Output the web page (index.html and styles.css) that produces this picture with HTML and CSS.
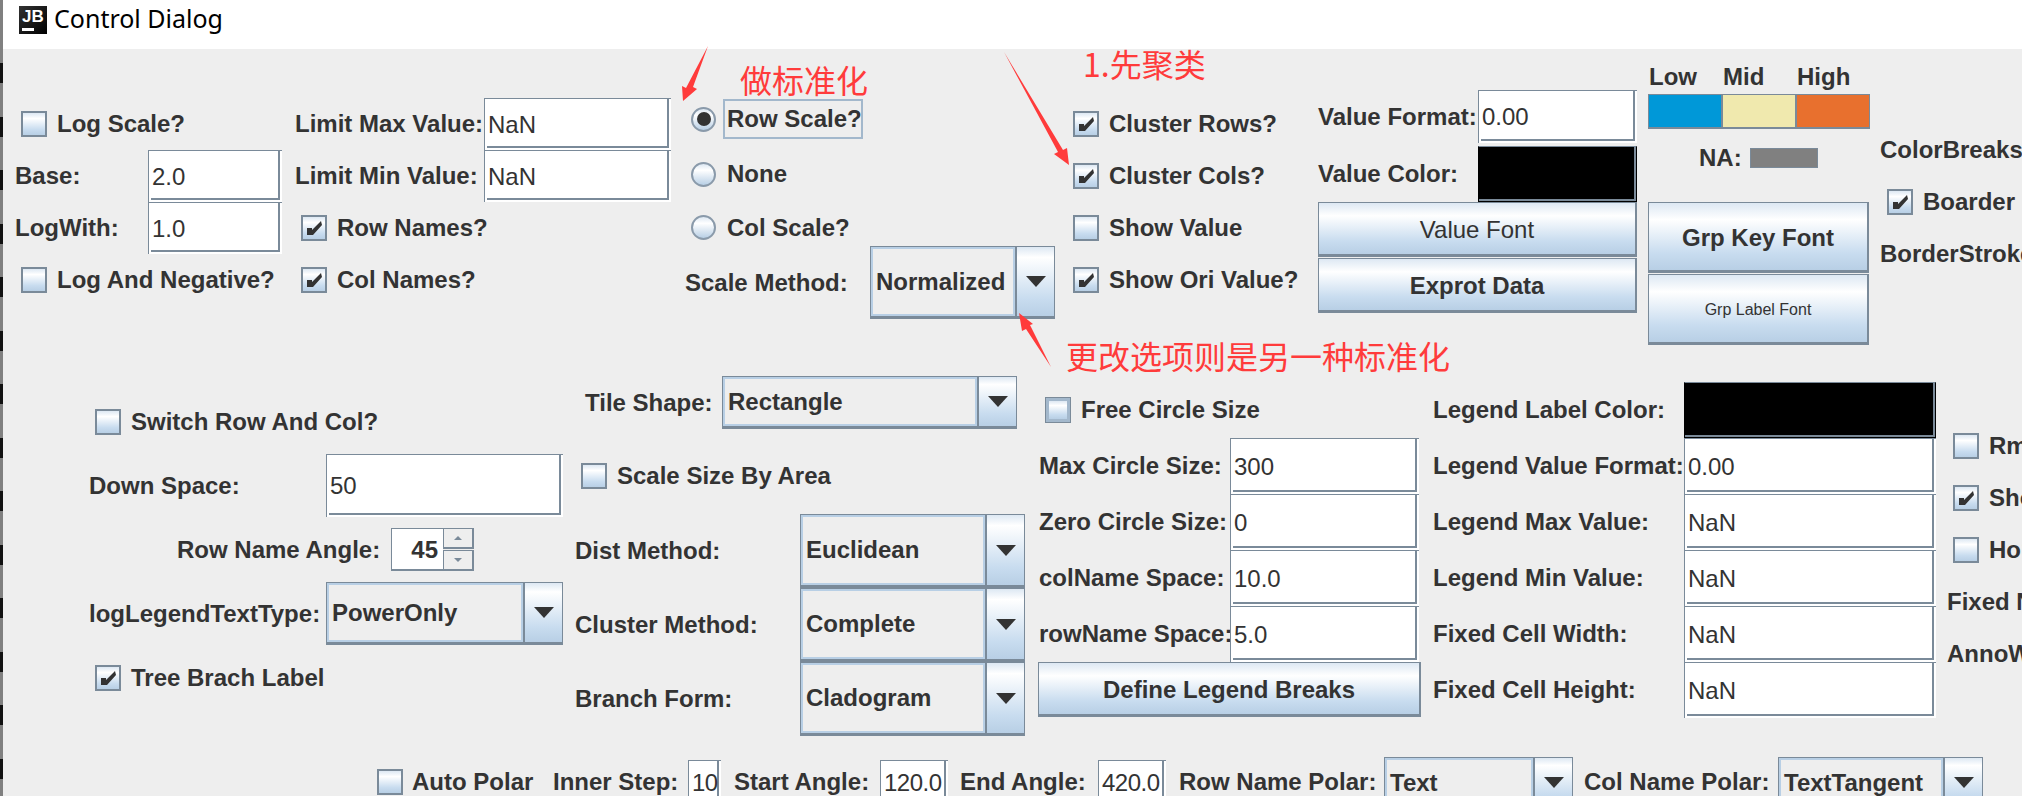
FILE: index.html
```html
<!DOCTYPE html>
<html lang="en">
<head>
    <meta charset="UTF-8">
    <title>Control Dialog</title>
    <link rel="stylesheet" href="styles.css">
</head>
<body>
    <div class="edge"></div>

    <header class="titlebar">
        <div class="jb-logo"><span>JB</span><i></i></div>
        <div class="title">Control Dialog</div>
    </header>

    <section class="top">
        <div class="col col-a">
            <div class="row pad-check"><span class="check"></span><span class="lbl">Log Scale?</span></div>
            <div class="row pad-base"><span class="lbl w-base">Base:</span><div class="field w-base-field">2.0</div></div>
            <div class="row pad-base"><span class="lbl w-base">LogWith:</span><div class="field w-base-field">1.0</div></div>
            <div class="row pad-check"><span class="check"></span><span class="lbl">Log And Negative?</span></div>
        </div>
        <div class="col col-b">
            <div class="row"><span class="lbl w-limit">Limit Max Value:</span><div class="field w-limit-field">NaN</div></div>
            <div class="row"><span class="lbl w-limit">Limit Min Value:</span><div class="field w-limit-field">NaN</div></div>
            <div class="row pad-6"><span class="check on"></span><span class="lbl">Row Names?</span></div>
            <div class="row pad-6"><span class="check on"></span><span class="lbl">Col Names?</span></div>
        </div>
        <div class="col col-c">
            <div class="radio-row"><span class="radio on"></span><span class="lbl focus">Row Scale?</span></div>
            <div class="radio-row"><span class="radio"></span><span class="lbl radio-lbl">None</span></div>
            <div class="radio-row"><span class="radio"></span><span class="lbl radio-lbl">Col Scale?</span></div>
            <div class="method-row"><span class="lbl w-method">Scale Method:</span><div class="combo w-method-combo"><span class="combo-val">Normalized</span><span class="combo-btn"></span></div></div>
        </div>
        <div class="col col-d">
            <div class="row"><span class="check on"></span><span class="lbl">Cluster Rows?</span></div>
            <div class="row"><span class="check on"></span><span class="lbl">Cluster Cols?</span></div>
            <div class="row"><span class="check"></span><span class="lbl">Show Value</span></div>
            <div class="row"><span class="check on"></span><span class="lbl">Show Ori Value?</span></div>
        </div>
        <div class="col col-e">
            <div class="value-row h-53"><span class="lbl w-value">Value Format:</span><div class="field w-value-field">0.00</div></div>
            <div class="value-row h-56"><span class="lbl w-value">Value Color:</span><div class="color-btn w-value-field"></div></div>
            <button class="btn plain h-55">Value Font</button>
            <button class="btn h-55 mt-1">Exprot Data</button>
        </div>
        <div class="col col-f">
            <div class="swatch-labels"><span class="lbl">Low</span><span class="lbl">Mid</span><span class="lbl">High</span></div>
            <div class="swatches"><div class="swatch low"></div><div class="swatch mid"></div><div class="swatch high"></div></div>
            <div class="na-row"><span class="lbl w-na">NA:</span><div class="swatch-na"></div></div>
            <button class="btn grp-btn">Grp Key Font</button>
            <button class="btn grp-btn small mt-1">Grp Label Font</button>
        </div>
        <div class="col col-g">
            <div class="row"><span class="lbl">ColorBreaks</span></div>
            <div class="row pad-7"><span class="check on"></span><span class="lbl">Boarder</span></div>
            <div class="row"><span class="lbl">BorderStroke:</span></div>
        </div>
    </section>

    <section class="bottom">
        <div class="col col-h">
            <div class="row-check pad-6 mt-64"><span class="check"></span><span class="lbl">Switch Row And Col?</span></div>
            <div class="row-tall mt-19"><span class="lbl w-side">Down Space:</span><div class="field w-side">50</div></div>
            <div class="row-angle mt-11"><span class="lbl w-angle">Row Name Angle:</span>
                <div class="spinner">
                    <div class="spin-val">45</div>
                    <div class="spin-btns"><span class="spin-up"></span><span class="spin-down"></span></div>
                </div>
            </div>
            <div class="row-tall mt-11"><span class="lbl w-side">logLegendTextType:</span><div class="combo w-side"><span class="combo-val">PowerOnly</span><span class="combo-btn"></span></div></div>
            <div class="row-check pad-6 mt-20"><span class="check on"></span><span class="lbl">Tree Brach Label</span></div>
        </div>
        <div class="col col-i">
            <div class="row-tile"><span class="lbl w-tile">Tile Shape:</span><div class="combo w-tile-combo"><span class="combo-val">Rectangle</span><span class="combo-btn"></span></div></div>
            <div class="row-check pad-6 mt-34"><span class="check"></span><span class="lbl">Scale Size By Area</span></div>
            <div class="row-dist mt-25"><span class="lbl w-dist">Dist Method:</span><div class="combo w-dist"><span class="combo-val">Euclidean</span><span class="combo-btn"></span></div></div>
            <div class="row-dist"><span class="lbl w-dist">Cluster Method:</span><div class="combo w-dist"><span class="combo-val">Complete</span><span class="combo-btn"></span></div></div>
            <div class="row-dist"><span class="lbl w-dist">Branch Form:</span><div class="combo w-dist"><span class="combo-val">Cladogram</span><span class="combo-btn"></span></div></div>
        </div>
        <div class="col col-j">
            <div class="row-check pad-7 mt-52"><span class="check soft"></span><span class="lbl">Free Circle Size</span></div>
            <div class="row-56 mt-15"><span class="lbl w-circle">Max Circle Size:</span><div class="field w-circle-field">300</div></div>
            <div class="row-56"><span class="lbl w-circle">Zero Circle Size:</span><div class="field w-circle-field">0</div></div>
            <div class="row-56"><span class="lbl w-circle">colName Space:</span><div class="field w-circle-field">10.0</div></div>
            <div class="row-56"><span class="lbl w-circle">rowName Space:</span><div class="field w-circle-field">5.0</div></div>
            <button class="btn legend-btn">Define Legend Breaks</button>
        </div>
        <div class="col col-k">
            <div class="row-56 mt-37"><span class="lbl w-legend">Legend Label Color:</span><div class="color-btn w-legend-field"></div></div>
            <div class="row-56"><span class="lbl w-legend">Legend Value Format:</span><div class="field w-legend-field">0.00</div></div>
            <div class="row-56"><span class="lbl w-legend">Legend Max Value:</span><div class="field w-legend-field">NaN</div></div>
            <div class="row-56"><span class="lbl w-legend">Legend Min Value:</span><div class="field w-legend-field">NaN</div></div>
            <div class="row-56"><span class="lbl w-legend">Fixed Cell Width:</span><div class="field w-legend-field">NaN</div></div>
            <div class="row-56"><span class="lbl w-legend">Fixed Cell Height:</span><div class="field w-legend-field">NaN</div></div>
        </div>
        <div class="col col-l">
            <div class="row pad-6"><span class="check"></span><span class="lbl">Rm Zero</span></div>
            <div class="row pad-6"><span class="check on"></span><span class="lbl">Show Grid</span></div>
            <div class="row pad-6"><span class="check"></span><span class="lbl">Horizontal</span></div>
            <div class="row"><span class="lbl">Fixed Name</span></div>
            <div class="row"><span class="lbl">AnnoWidth</span></div>
        </div>
    </section>

    <section class="strip">
        <div class="polar-check"><span class="check"></span><span class="lbl">Auto Polar</span></div>
        <span class="lbl w-inner">Inner Step:</span>
        <div class="field strip-field w-inner-field">10</div>
        <span class="lbl w-start">Start Angle:</span>
        <div class="field strip-field w-angle-field">120.0</div>
        <span class="lbl w-end">End Angle:</span>
        <div class="field strip-field w-angle-field">420.0</div>
        <span class="lbl w-rowpolar">Row Name Polar:</span>
        <div class="combo w-rowpolar-combo"><span class="combo-val">Text</span><span class="combo-btn"></span></div>
        <span class="lbl w-colpolar">Col Name Polar:</span>
        <div class="combo w-colpolar-combo"><span class="combo-val">TextTangent</span><span class="combo-btn"></span></div>
    </section>

    <!-- red notes pasted over the screenshot -->
    <svg class="arrows" width="2022" height="796" viewBox="0 0 2022 796">
        <polygon points="708,46 693,87 697,89 683,101 682,86 686,88"/>
        <polygon points="1004,52 1063,150 1067,148 1069,165 1054,154 1058,152"/>
        <polygon points="1051,367 1030,325 1033,324 1019,313 1022,331 1026,329"/>
    </svg>
    <div class="note note-scale">做标准化</div>
    <div class="note note-cluster">1.先聚类</div>
    <div class="note note-change">更改选项则是另一种标准化</div>
</body>
</html>
```

FILE: styles.css
```css
* {
    box-sizing: border-box;
}
html, body {
    margin: 0;
    width: 2022px;
    height: 796px;
    overflow: hidden;
}
body {
    background-color: #eeeeee;
    color: #333333;
    font-family: "Liberation Sans", Arial, sans-serif;
    font-size: 24px;
    position: relative;
}
.edge {
    position: absolute;
    left: 0;
    top: 0;
    width: 3px;
    height: 796px;
    background: #808080;
}
.edge::after {
    content: "";
    position: absolute;
    left: 0;
    top: 63px;
    bottom: 0;
    width: 3px;
    background: repeating-linear-gradient(to bottom, #111111 0, #111111 20px, #808080 20px, #808080 53.5px);
}

/* title bar */
.titlebar {
    height: 49px;
    background: #ffffff;
    display: flex;
    align-items: center;
    padding-left: 19px;
    gap: 7px;
}
.jb-logo {
    width: 28px;
    height: 28px;
    background: linear-gradient(135deg, #333333, #000000);
    color: #ffffff;
    position: relative;
    margin-bottom: 10px;
    font-weight: bold;
    font-size: 17px;
    line-height: 17px;
    padding: 2px 0 0 3px;
}
.jb-logo i {
    position: absolute;
    left: 3px;
    top: 22px;
    width: 12px;
    height: 3px;
    background: #ffffff;
}
.title {
    font-family: "Noto Sans", sans-serif;
    font-size: 25px;
    color: #000000;
    margin-bottom: 13px;
}

/* main sections */
.top {
    display: flex;
    height: 296px;
}
.bottom {
    display: flex;
    height: 412px;
}
.strip {
    display: flex;
    align-items: center;
    height: 50px;
    padding-left: 377px;
}
.col {
    flex: none;
}
.col-a { width: 295px; padding-top: 49px; }
.col-b { width: 390px; padding-top: 49px; }
.col-c {
    width: 388px;
    padding-top: 50px;
    display: grid;
    grid-template-rows: 40px 70px 37px 73px;
}
.col-d { width: 245px; padding-top: 49px; }
.col-e { width: 330px; padding-top: 41px; }
.col-f { width: 232px; padding-top: 11px; }
.col-g { width: 142px; padding-top: 75px; }
.col-h { width: 575px; padding-left: 89px; }
.col-i { width: 463px; }
.col-j { width: 395px; }
.col-k { width: 514px; }
.col-l { width: 75px; padding-top: 75px; }

.row {
    display: flex;
    align-items: center;
    height: 52px;
}
.row-check {
    display: flex;
    align-items: center;
    height: 26px;
}
.row-56 {
    display: flex;
    align-items: center;
    height: 56px;
}
.row-tall {
    display: flex;
    align-items: center;
    height: 63px;
}
.row-angle {
    display: flex;
    align-items: center;
    height: 43px;
    padding-left: 88px;
}
.row-tile {
    display: flex;
    align-items: center;
    height: 53px;
    margin-top: 31px;
    padding-left: 10px;
}
.row-dist {
    display: flex;
    align-items: center;
    height: 74px;
}
.radio-row {
    display: flex;
    align-items: center;
    padding-left: 6px;
    gap: 7px;
}
.method-row {
    display: flex;
    align-items: center;
}
.value-row {
    display: flex;
    align-items: center;
}

.pad-check { padding-left: 21px; }
.pad-base { padding-left: 15px; }
.pad-6 { padding-left: 6px; }
.pad-7 { padding-left: 7px; }
.mt-1 { margin-top: 1px; }
.mt-11 { margin-top: 11px; }
.mt-15 { margin-top: 15px; }
.mt-19 { margin-top: 19px; }
.mt-20 { margin-top: 20px; }
.mt-25 { margin-top: 25px; }
.mt-34 { margin-top: 34px; }
.mt-37 { margin-top: 37px; }
.mt-52 { margin-top: 52px; }
.mt-64 { margin-top: 64px; }
.h-53 { height: 53px; margin-bottom: 3px; }
.h-55 { height: 55px; }
.h-56 { height: 56px; }

.lbl {
    font-weight: bold;
    white-space: nowrap;
    flex: none;
}
.w-base { width: 133px; }
.w-base-field { width: 134px; }
.w-limit { width: 189px; }
.w-limit-field { width: 187px; }
.w-method { width: 185px; }
.w-method-combo { width: 185px; }
.w-value { width: 160px; }
.w-value-field { width: 159px; }
.w-side { width: 237px; }
.w-angle { width: 214px; }
.w-tile { width: 137px; }
.w-tile-combo { width: 295px; }
.w-dist { width: 225px; }
.w-circle { width: 192px; padding-left: 1px; }
.w-circle-field { width: 189px; }
.w-legend { width: 251px; }
.w-legend-field { width: 252px; }
.w-inner { width: 135px; }
.w-inner-field { width: 33px; }
.w-start { width: 159px; padding-left: 13px; }
.w-end { width: 150px; padding-left: 12px; }
.w-angle-field { width: 68px; }
.w-rowpolar { width: 218px; padding-left: 13px; }
.w-rowpolar-combo { width: 189px; }
.w-colpolar { width: 205px; padding-left: 11px; }
.w-colpolar-combo { width: 205px; }
.w-na { width: 51px; }

/* swing style widgets */
.check {
    flex: none;
    display: block;
    width: 26px;
    height: 26px;
    margin-right: 10px;
    border: 2px solid #7a8a99;
    background: linear-gradient(to bottom, #dde8f3 0, #ffffff 25%, #c8dcef 75%, #b8cfe5 100%);
    position: relative;
}
.check.soft {
    border: 4px solid #a3b8cc;
    outline: 1px solid #7a8a99;
    outline-offset: -1px;
}
.check.on::after {
    content: "";
    position: absolute;
    left: 0;
    top: 0;
    width: 22px;
    height: 22px;
    background: #333333;
    clip-path: polygon(4px 11px, 9px 11px, 9px 13px, 18px 4px, 19px 8px, 10px 18px, 4px 18px);
}
.radio {
    flex: none;
    display: block;
    width: 25px;
    height: 25px;
    border: 2px solid #8a9aaa;
    border-radius: 50%;
    background: linear-gradient(to bottom, #dde8f3 0, #ffffff 30%, #b8cfe5 100%);
    position: relative;
}
.radio.on::after {
    content: "";
    position: absolute;
    left: 3.5px;
    top: 3.5px;
    width: 14px;
    height: 14px;
    border-radius: 50%;
    background: #333333;
}
.focus {
    display: flex;
    align-items: center;
    height: 40px;
    width: 140px;
    padding: 0 2px;
    border: 2px solid #a3b8cc;
}
.radio-lbl {
    padding: 0 4px;
}
.field {
    flex: none;
    height: 100%;
    display: flex;
    align-items: center;
    padding-left: 3px;
    background: #ffffff;
    color: #333333;
    border-top: 1px solid #7a8a99;
    border-left: 1px solid #7a8a99;
    box-shadow: inset 2px 0 0 #ffffff, inset -2px -2px 0 #ffffff, inset -4px -4px 0 #7a8a99;
}
.strip-field {
    height: 50px;
    padding-bottom: 6px;
    letter-spacing: -0.5px;
    margin-top: 3px;
    align-self: flex-start;
}
.color-btn {
    flex: none;
    height: 100%;
    background: #000000;
    border: 1px solid #000000;
    border-top-color: #7a8a99;
    box-shadow: inset -2px -2px 0 #7a8a99;
}
.btn {
    display: block;
    width: 319px;
    padding: 2px 0 0;
    border: 1px solid #7a8a99;
    border-right-width: 2px;
    border-bottom-width: 3px;
    background: linear-gradient(to bottom, #dde8f3 0, #ffffff 25%, #c8dcef 75%, #b8cfe5 100%);
    color: #333333;
    font-family: "Liberation Sans", Arial, sans-serif;
    font-size: 24px;
    font-weight: bold;
}
.btn.plain {
    font-weight: normal;
}
.btn.small {
    font-size: 16px;
    font-weight: normal;
}
.grp-btn {
    width: 221px;
    height: 71px;
}
.legend-btn {
    width: 383px;
    height: 55px;
}
.combo {
    flex: none;
    display: flex;
    height: 100%;
    background: #eeeeee;
    border: 1px solid #7a8a99;
    border-bottom-width: 3px;
}
.strip .combo {
    height: 53px;
    align-self: flex-start;
}
.combo-val {
    flex: 1;
    display: flex;
    align-items: center;
    padding-left: 3px;
    font-weight: bold;
    border: 2px solid #b8cfe5;
    white-space: nowrap;
}
.combo-btn {
    flex: none;
    width: 39px;
    border-left: 2px solid #7a8a99;
    background: linear-gradient(to bottom, #dde8f3 0, #ffffff 15%, #c8dcef 75%, #b8cfe5 100%);
    display: flex;
    align-items: center;
    justify-content: center;
}
.combo-btn::after {
    content: "";
    border-top: 11px solid #333333;
    border-left: 10px solid transparent;
    border-right: 10px solid transparent;
}
.spinner {
    flex: none;
    display: flex;
    width: 83px;
    height: 43px;
}
.spin-val {
    width: 52px;
    text-align: right;
    padding-right: 5px;
    font-weight: bold;
    line-height: 42px;
    background: #ffffff;
    border-top: 1px solid #7a8a99;
    border-left: 1px solid #7a8a99;
    box-shadow: inset 0 -2px 0 #7a8a99;
}
.spin-btns {
    width: 31px;
    display: flex;
    flex-direction: column;
    gap: 1px;
}
.spin-up, .spin-down {
    flex: 1;
    display: flex;
    align-items: center;
    justify-content: center;
    background: #eeeeee;
    border: 1px solid #7a8a99;
    border-right-width: 2px;
    border-bottom-width: 2px;
}
.spin-up::after {
    content: "";
    border-bottom: 4px solid #7a8a99;
    border-left: 4px solid transparent;
    border-right: 4px solid transparent;
}
.spin-down::after {
    content: "";
    border-top: 4px solid #7a8a99;
    border-left: 4px solid transparent;
    border-right: 4px solid transparent;
}
.swatch-labels {
    display: grid;
    grid-template-columns: 74px 74px 74px;
    height: 34px;
    padding-left: 1px;
    align-items: center;
}
.swatches {
    display: grid;
    grid-template-columns: 74px 74px 74px;
    height: 35px;
}
.swatch {
    border: 1px solid #7a8a99;
    border-bottom-width: 2px;
}
.swatch.low { background: #0098d8; }
.swatch.mid { background: #f0e9ae; }
.swatch.high { background: #e8702e; }
.na-row {
    display: flex;
    align-items: center;
    height: 20px;
    margin-top: 19px;
    margin-bottom: 34px;
    padding-left: 51px;
}
.swatch-na {
    width: 68px;
    height: 20px;
    background: #808080;
    border: 1px solid #7a8a99;
}
.polar-check {
    display: flex;
    align-items: center;
    width: 176px;
}
.polar-check .check {
    margin-right: 9px;
}

/* pasted annotations */
.arrows {
    position: absolute;
    left: 0;
    top: 0;
    fill: #ff3b3b;
    pointer-events: none;
}
.note {
    position: absolute;
    color: #ff3b3b;
    font-family: "Noto Sans CJK SC", "Noto Sans", sans-serif;
    font-size: 32px;
    line-height: 32px;
    white-space: nowrap;
}
.note-scale { left: 740px; top: 63px; }
.note-cluster { left: 1083px; top: 47px; }
.note-change { left: 1066px; top: 339px; }
```
